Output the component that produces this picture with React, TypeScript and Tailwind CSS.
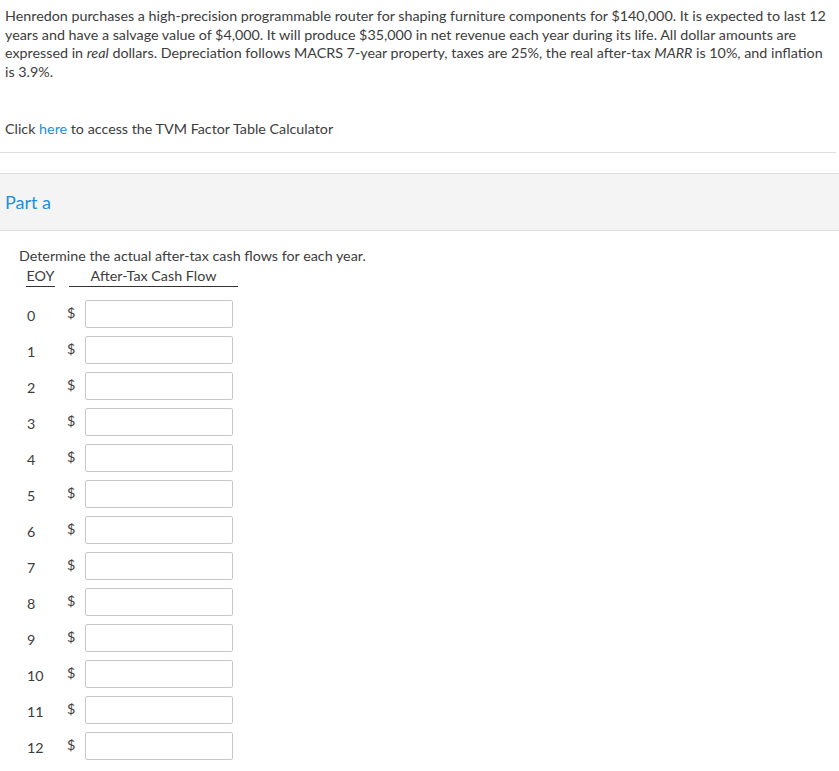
import React from "react";

const years = [0, 1, 2, 3, 4, 5, 6, 7, 8, 9, 10, 11, 12];

const CashFlowRow: React.FC<{ year: number }> = ({ year }) => (
  <div className="flex h-[36px] items-center">
    <div className="w-[41px] pl-[27px] pt-[4px]">{year}</div>
    <div className="w-[44px] pl-[26px] pb-[2px]">$</div>
    <input
      type="text"
      className="h-[28px] w-[148px] rounded-[2px] border border-[#c8c8c8] bg-white px-1 text-[14px] outline-none"
    />
  </div>
);

export default function App() {
  return (
    <div
      className="min-h-[771px] bg-white text-[14.3px] leading-[18.6px] text-[#3c3c3c]"
      style={{ fontFamily: "Lato, 'Open Sans', sans-serif" }}
    >
      {/* Question text */}
      <div className="pl-[5px] pr-[8px] pt-[7px]">
        <p>
          Henredon purchases a high-precision programmable router for shaping furniture components for $140,000. It is
          expected to last 12 years and have a salvage value of $4,000. It will produce $35,000 in net revenue each year
          during its life. All dollar amounts are expressed in <i>real</i> dollars. Depreciation follows MACRS 7-year
          property, taxes are 25%, the real after-tax <i>MARR</i> is 10%, and inflation is 3.9%.
        </p>
        <p className="mt-[39px]">
          Click <span className="text-[#1a8fdc]">here</span> to access the TVM Factor Table Calculator
        </p>
      </div>

      <div className="mt-[13px] mr-[3px] border-b border-[#dedede]" />

      {/* Part header */}
      <div className="mt-[20px] flex h-[58px] items-center border-y border-[#dedede] bg-[#f4f4f4] pl-[5px]">
        <span className="text-[18px] text-[#1a8fdc]">Part a</span>
      </div>

      {/* Part body */}
      <div className="pt-[16px]">
        <p className="pl-[19px]">Determine the actual after-tax cash flows for each year.</p>
        <div className="mt-[1px] flex pl-[26px]">
          <div className="w-[29px] border-b border-[#333] pb-[1px] text-center">EOY</div>
          <div className="ml-[14px] w-[169px] border-b border-[#333] pb-[1px] text-center">After-Tax Cash Flow</div>
        </div>
        <div className="mt-[9px]">
          {years.map((y) => (
            <CashFlowRow key={y} year={y} />
          ))}
        </div>
      </div>
    </div>
  );
}
